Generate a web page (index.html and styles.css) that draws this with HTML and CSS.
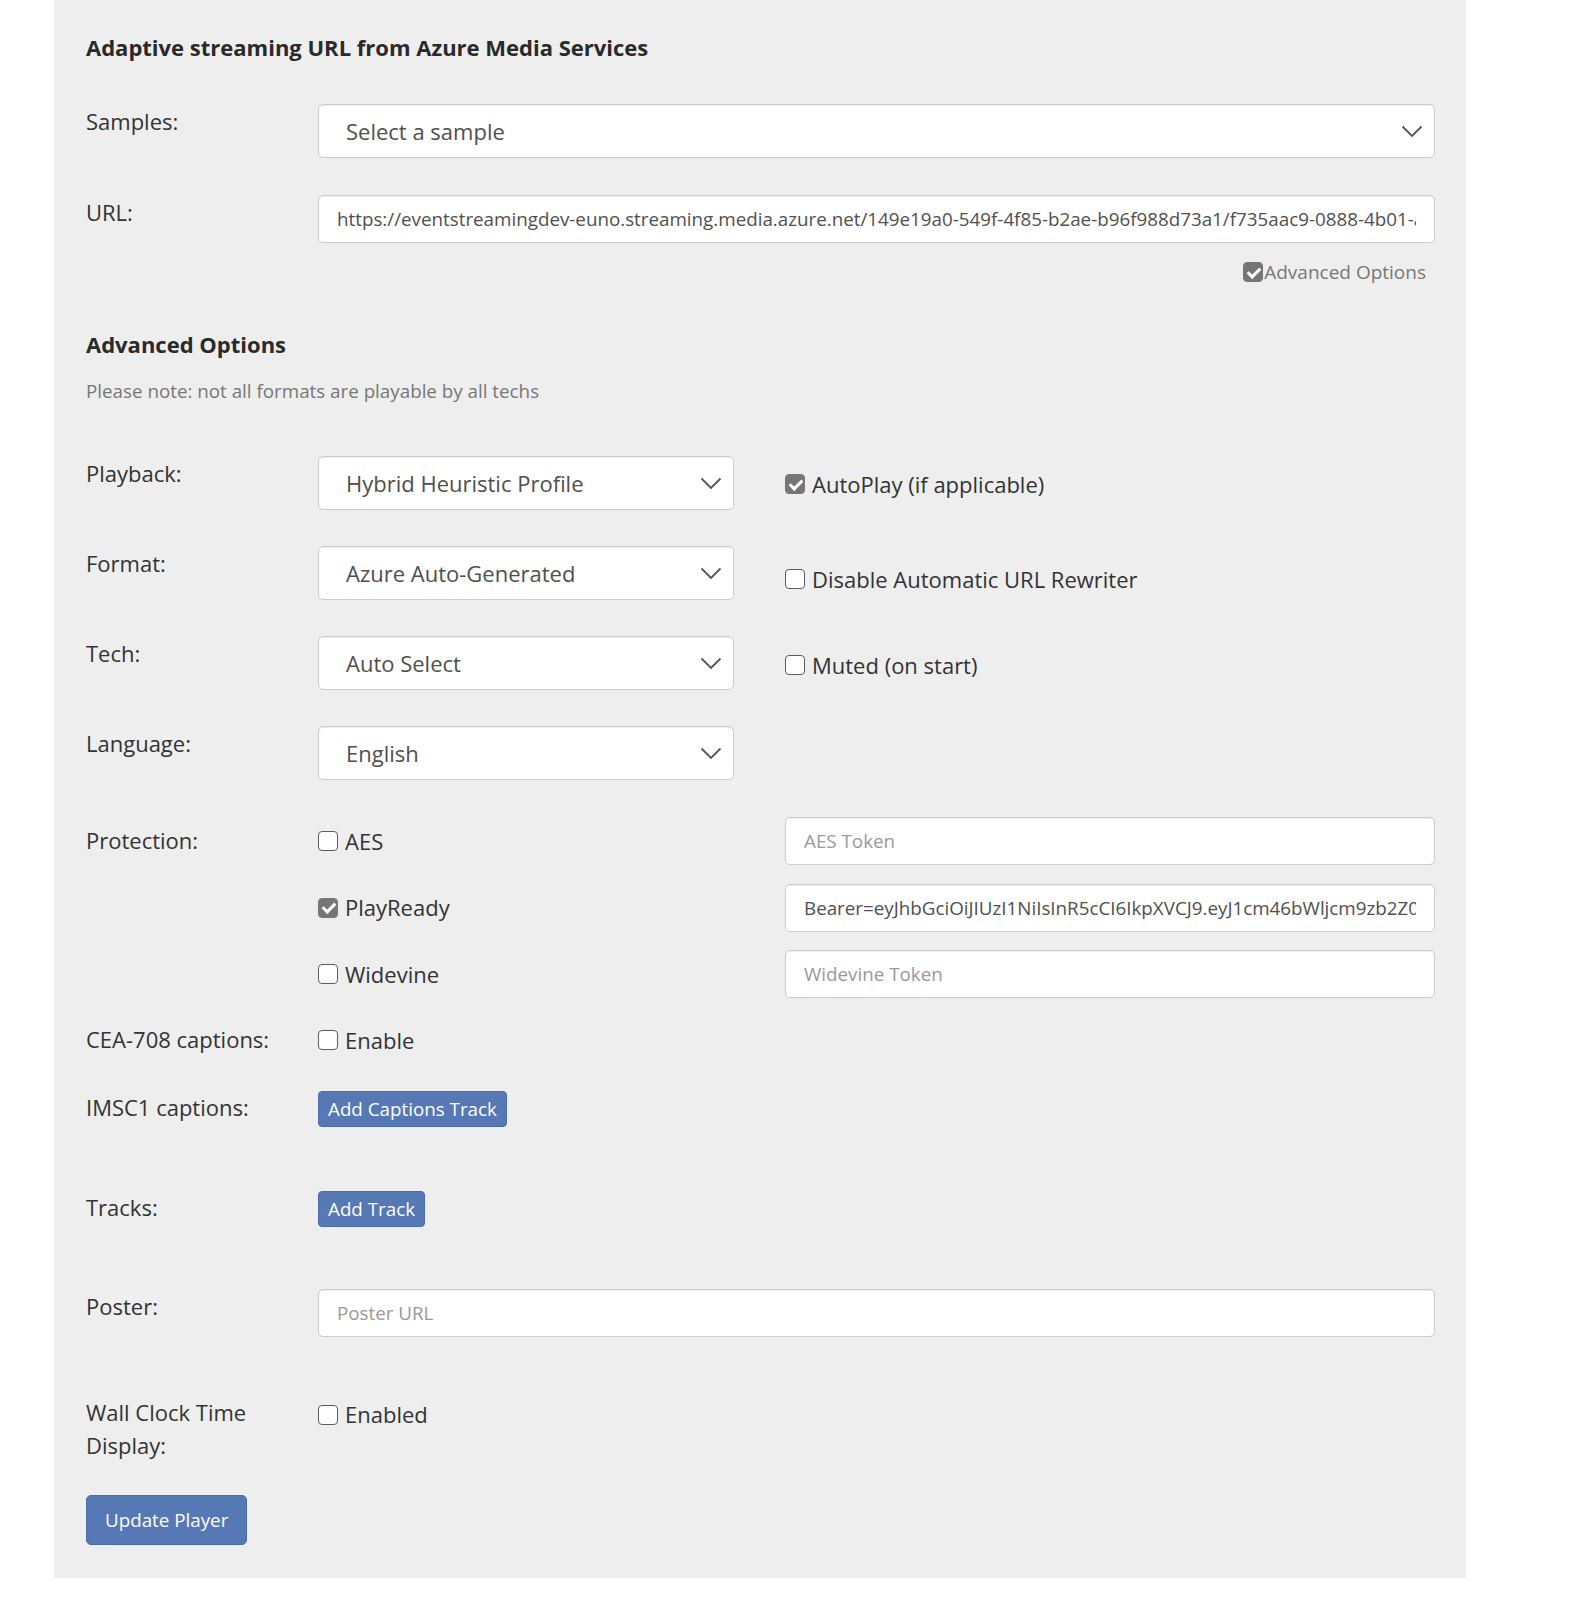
FILE: index.html
```html
<!DOCTYPE html>
<html lang="en">
<head>
<meta charset="utf-8">
<title>Azure Media Player - Advanced Options</title>
<link rel="stylesheet" href="styles.css">
</head>
<body>
<div class="panel">
  <h4 class="title">Adaptive streaming URL from Azure Media Services</h4>

  <div class="row r-samples">
    <label class="lbl">Samples:</label>
    <div class="select wide">
      <span>Select a sample</span>
      <svg class="chev" width="22" height="13" viewBox="0 0 22 13"><polyline points="1.5,1.5 11,11 20.5,1.5" fill="none" stroke="#555" stroke-width="1.8"/></svg>
    </div>
  </div>

  <div class="row r-url">
    <label class="lbl">URL:</label>
    <input class="input" type="text" value="https://eventstreamingdev-euno.streaming.media.azure.net/149e19a0-549f-4f85-b2ae-b96f988d73a1/f735aac9-0888-4b01-a7c5-6dba4e1e4c4c.ism/manifest">
  </div>

  <div class="adv-toggle">
    <input class="cb small" type="checkbox" checked><span>Advanced Options</span>
  </div>

  <h4 class="section">Advanced Options</h4>
  <p class="note">Please note: not all formats are playable by all techs</p>

  <div class="row r-playback">
    <label class="lbl">Playback:</label>
    <div class="select narrow">
      <span>Hybrid Heuristic Profile</span>
      <svg class="chev" width="22" height="13" viewBox="0 0 22 13"><polyline points="1.5,1.5 11,11 20.5,1.5" fill="none" stroke="#555" stroke-width="1.8"/></svg>
    </div>
    <label class="opt p1"><input class="cb" type="checkbox" checked>AutoPlay (if applicable)</label>
  </div>

  <div class="row r-next">
    <label class="lbl">Format:</label>
    <div class="select narrow">
      <span>Azure Auto-Generated</span>
      <svg class="chev" width="22" height="13" viewBox="0 0 22 13"><polyline points="1.5,1.5 11,11 20.5,1.5" fill="none" stroke="#555" stroke-width="1.8"/></svg>
    </div>
    <label class="opt p2"><input class="cb" type="checkbox">Disable Automatic URL Rewriter</label>
  </div>

  <div class="row r-next">
    <label class="lbl">Tech:</label>
    <div class="select narrow">
      <span>Auto Select</span>
      <svg class="chev" width="22" height="13" viewBox="0 0 22 13"><polyline points="1.5,1.5 11,11 20.5,1.5" fill="none" stroke="#555" stroke-width="1.8"/></svg>
    </div>
    <label class="opt p3"><input class="cb" type="checkbox">Muted (on start)</label>
  </div>

  <div class="row r-next">
    <label class="lbl">Language:</label>
    <div class="select narrow">
      <span>English</span>
      <svg class="chev" width="22" height="13" viewBox="0 0 22 13"><polyline points="1.5,1.5 11,11 20.5,1.5" fill="none" stroke="#555" stroke-width="1.8"/></svg>
    </div>
  </div>

  <div class="row r-protection">
    <label class="lbl centered">Protection:</label>
    <div class="prot-list">
      <div class="prot-row">
        <label class="check-col"><input class="cb" type="checkbox">AES</label>
        <input class="input" type="text" placeholder="AES Token">
      </div>
      <div class="prot-row">
        <label class="check-col"><input class="cb" type="checkbox" checked>PlayReady</label>
        <input class="input" type="text" value="Bearer=eyJhbGciOiJIUzI1NiIsInR5cCI6IkpXVCJ9.eyJ1cm46bWljcm9zb2Z0OmF6dXJlOm1lZGlhc2VydmljZXM6Y29udGVudGtleWlkZW50aWZpZXIiOiI">
      </div>
      <div class="prot-row">
        <label class="check-col"><input class="cb" type="checkbox">Widevine</label>
        <input class="input" type="text" placeholder="Widevine Token">
      </div>
    </div>
  </div>

  <div class="row r-cea">
    <label class="lbl centered">CEA-708 captions:</label>
    <label class="check-col"><input class="cb" type="checkbox">Enable</label>
  </div>

  <div class="row r-imsc">
    <label class="lbl flush">IMSC1 captions:</label>
    <button class="btn" type="button">Add Captions Track</button>
  </div>

  <div class="row r-tracks">
    <label class="lbl flush">Tracks:</label>
    <button class="btn" type="button">Add Track</button>
  </div>

  <div class="row r-poster">
    <label class="lbl">Poster:</label>
    <input class="input" type="text" placeholder="Poster URL">
  </div>

  <div class="row r-wall">
    <label class="lbl">Wall Clock Time Display:</label>
    <label class="check-line"><input class="cb" type="checkbox">Enabled</label>
  </div>

  <button class="btn btn-lg" type="button">Update Player</button>
</div>
</body>
</html>
```

FILE: styles.css
```css
* {
  box-sizing: border-box;
}

body {
  margin: 0;
  background: #ffffff;
  font-family: "Open Sans", "Noto Sans", sans-serif;
  color: #333333;
}

.panel {
  margin-left: 54px;
  width: 1412px;
  background: #eeeeee;
  padding: 32px 31px 33px 32px;
}

.title,
.section {
  margin: 0;
  font-size: 22px;
  font-weight: 700;
  line-height: 30px;
  color: #2a2a2a;
}

.row {
  display: flex;
  align-items: flex-start;
}

.lbl {
  width: 232px;
  flex: none;
  font-size: 22px;
  line-height: 33px;
  padding-top: 1px;
  color: #333333;
}

.lbl.centered {
  padding-top: 7px;
}

.lbl.flush {
  padding-top: 0;
}

.r-samples { margin-top: 42px; }
.r-url { margin-top: 37px; }
.r-playback { margin-top: 52px; }
.r-next { margin-top: 36px; }
.r-protection { margin-top: 37px; }
.r-cea { margin-top: 18px; height: 48px; }
.r-imsc { margin-top: 27px; }
.r-tracks { margin-top: 64px; }
.r-poster { margin-top: 62px; }
.r-wall { margin-top: 58px; }

.select {
  position: relative;
  height: 54px;
  background: #ffffff;
  border: 1px solid #cccccc;
  border-radius: 5px;
  box-shadow: inset 0 1px 1px rgba(0, 0, 0, 0.075);
  display: flex;
  align-items: center;
  padding-left: 27px;
  font-size: 22px;
  color: #4f4f4f;
}

.select.wide {
  flex: 1;
}

.select.narrow {
  width: 416px;
  flex: none;
}

.chev {
  position: absolute;
  right: 11px;
  top: 50%;
  margin-top: -6px;
}

.input {
  display: block;
  flex: 1;
  min-width: 0;
  width: 100%;
  height: 48px;
  margin: 0;
  background: #ffffff;
  border: 1px solid #cccccc;
  border-radius: 5px;
  box-shadow: inset 0 1px 1px rgba(0, 0, 0, 0.075);
  padding: 0 18px;
  font-family: "Open Sans", "Noto Sans", sans-serif;
  font-size: 18.8px;
  color: #4f4f4f;
  outline: none;
}

.input::placeholder {
  color: #999999;
}

.adv-toggle {
  margin-top: 16px;
  display: flex;
  justify-content: flex-end;
  align-items: flex-start;
  padding-right: 9px;
  font-size: 19px;
  line-height: 27px;
  color: #777777;
}

.adv-toggle .cb {
  margin: 3px 1px 0 0;
}

.section {
  margin-top: 43px;
}

.note {
  margin: 19px 0 0;
  font-size: 18.8px;
  line-height: 26px;
  color: #777777;
}

.opt {
  margin-left: 51px;
  height: 54px;
  display: flex;
  align-items: center;
  font-size: 22px;
  line-height: 33px;
  color: #333333;
}

.opt.p1 { padding-top: 2px; }
.opt.p2 { padding-top: 12px; }
.opt.p3 { padding-top: 4px; }

.prot-list {
  flex: 1;
  display: flex;
  flex-direction: column;
  gap: 18.5px;
}

.prot-row {
  display: flex;
  align-items: center;
  height: 48px;
}

.check-col {
  width: 467px;
  flex: none;
  height: 48px;
  display: flex;
  align-items: center;
  font-size: 22px;
  line-height: 33px;
  color: #333333;
}

.check-line {
  display: flex;
  align-items: center;
  padding-top: 3px;
  font-size: 22px;
  line-height: 33px;
  color: #333333;
}

.cb {
  appearance: none;
  -webkit-appearance: none;
  position: relative;
  flex: none;
  width: 20px;
  height: 20px;
  margin: 0 7px 0 0;
  background: #ffffff;
  border: 1.5px solid #5c5c5c;
  border-radius: 4px;
}

.cb:checked {
  background: #767676;
  border-color: #767676;
}

.cb:checked::after {
  content: "";
  position: absolute;
  left: 5.5px;
  top: 1.5px;
  width: 5px;
  height: 10px;
  border: solid #ffffff;
  border-width: 0 3px 3px 0;
  transform: rotate(45deg);
}

.btn {
  display: inline-flex;
  align-items: center;
  height: 36px;
  padding: 0 9px;
  margin: 0;
  background: #5679b5;
  border: 1px solid #4a6da9;
  border-radius: 4px;
  color: #ffffff;
  font-family: "Open Sans", "Noto Sans", sans-serif;
  font-size: 18.8px;
  line-height: 1;
}

.btn-lg {
  display: flex;
  margin-top: 33px;
  height: 50px;
  padding: 0 18px;
  border-radius: 5px;
}
```
